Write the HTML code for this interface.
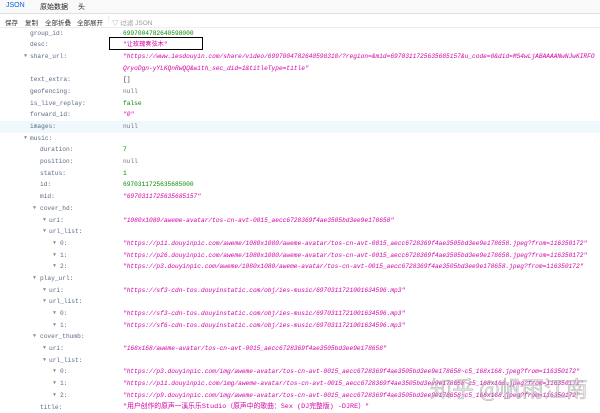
<!DOCTYPE html>
<html><head><meta charset="utf-8"><style>
*{margin:0;padding:0;box-sizing:border-box}
body{width:600px;height:413px;overflow:hidden;background:#fff;font-family:"Liberation Sans","Noto Sans CJK SC",sans-serif;position:relative}
.tabs{position:absolute;left:0;top:0;width:600px;height:14px;background:#f9f9fa;border-bottom:1px solid #e0e0e2;font-size:7px}
.tabs span{position:absolute;top:2px;color:#222}
.tb{position:absolute;left:0;top:14px;width:600px;height:14px;background:#fff;border-bottom:1px solid #eee;font-size:6.5px;color:#333}
.tb span{position:absolute;top:3px}
.rows{position:absolute;left:0;top:27.5px;width:600px;font-family:"Liberation Mono","Noto Sans CJK SC",monospace;font-size:6.2px}
.r{position:relative;height:11.7px;line-height:11.7px;white-space:nowrap}
.k{position:absolute;color:#5a6b85}
.v{position:absolute;left:123px}
.s{color:#d400a8;font-style:italic}
.n{color:#058b00}
.nl{color:#777}
.a{position:absolute;color:#888;font-size:5px}
.hl{background:#eef8fd}
</style></head><body>
<div class="tabs"><span style="left:6px;color:#0060df">JSON</span><span style="left:40px">原始数据</span><span style="left:78px">头</span></div>
<div class="tb"><span style="left:5px">保存</span><span style="left:25px">复制</span><span style="left:45px">全部折叠</span><span style="left:77px">全部展开</span><span style="left:108px;top:1px;color:#ddd">|</span><span style="left:112px;color:#999">▽ 过滤 JSON</span></div>
<div class="rows">
<div class="r"><span class="k" style="left:30px">group_id:</span><span class="v n">6997004782640598000</span></div>
<div class="r"><span class="k" style="left:30px">desc:</span><span class="v s" style="font-style:normal">"让玫瑰奏弦木"</span></div>
<div class="r"><span class="a" style="left:24px">▼</span><span class="k" style="left:30px">share_url:</span><span class="v s">"https://www.iesdouyin.com/share/video/6997004782640598310/?region=&amp;mid=6970311725635685157&amp;u_code=0&amp;did=MS4wLjABAAAANwNJwKIRFO</span></div>
<div class="r"><span class="v s">QryoDgn-yYLKQnRwQQ&amp;with_sec_did=1&amp;titleType=title"</span></div>
<div class="r"><span class="k" style="left:30px">text_extra:</span><span class="v" style="color:#333">[]</span></div>
<div class="r"><span class="k" style="left:30px">geofencing:</span><span class="v nl">null</span></div>
<div class="r"><span class="k" style="left:30px">is_live_replay:</span><span class="v n">false</span></div>
<div class="r"><span class="k" style="left:30px">forward_id:</span><span class="v s">"0"</span></div>
<div class="r hl"><span class="k" style="left:30px">images:</span><span class="v nl">null</span></div>
<div class="r"><span class="a" style="left:24px">▼</span><span class="k" style="left:30px">music:</span></div>
<div class="r"><span class="k" style="left:40px">duration:</span><span class="v n">7</span></div>
<div class="r"><span class="k" style="left:40px">position:</span><span class="v nl">null</span></div>
<div class="r"><span class="k" style="left:40px">status:</span><span class="v n">1</span></div>
<div class="r"><span class="k" style="left:40px">id:</span><span class="v n">6970311725635685000</span></div>
<div class="r"><span class="k" style="left:40px">mid:</span><span class="v s">"6970311725635685157"</span></div>
<div class="r"><span class="a" style="left:33px">▼</span><span class="k" style="left:40px">cover_hd:</span></div>
<div class="r"><span class="a" style="left:43px">▼</span><span class="k" style="left:49px">uri:</span><span class="v s">"1080x1080/aweme-avatar/tos-cn-avt-0015_aecc6728369f4ae3505bd3ee9e178658"</span></div>
<div class="r"><span class="a" style="left:43px">▼</span><span class="k" style="left:49px">url_list:</span></div>
<div class="r"><span class="a" style="left:53px">▼</span><span class="k" style="left:60px">0:</span><span class="v s">"https://p11.douyinpic.com/aweme/1080x1080/aweme-avatar/tos-cn-avt-0015_aecc6728369f4ae3505bd3ee9e178658.jpeg?from=116350172"</span></div>
<div class="r"><span class="a" style="left:53px">▼</span><span class="k" style="left:60px">1:</span><span class="v s">"https://p26.douyinpic.com/aweme/1080x1080/aweme-avatar/tos-cn-avt-0015_aecc6728369f4ae3505bd3ee9e178658.jpeg?from=116350172"</span></div>
<div class="r"><span class="a" style="left:53px">▼</span><span class="k" style="left:60px">2:</span><span class="v s">"https://p3.douyinpic.com/aweme/1080x1080/aweme-avatar/tos-cn-avt-0015_aecc6728369f4ae3505bd3ee9e178658.jpeg?from=116350172"</span></div>
<div class="r"><span class="a" style="left:33px">▼</span><span class="k" style="left:40px">play_url:</span></div>
<div class="r"><span class="a" style="left:43px">▼</span><span class="k" style="left:49px">uri:</span><span class="v s">"https://sf3-cdn-tos.douyinstatic.com/obj/ies-music/6970311721001634596.mp3"</span></div>
<div class="r"><span class="a" style="left:43px">▼</span><span class="k" style="left:49px">url_list:</span></div>
<div class="r"><span class="a" style="left:53px">▼</span><span class="k" style="left:60px">0:</span><span class="v s">"https://sf3-cdn-tos.douyinstatic.com/obj/ies-music/6970311721001634596.mp3"</span></div>
<div class="r"><span class="a" style="left:53px">▼</span><span class="k" style="left:60px">1:</span><span class="v s">"https://sf6-cdn-tos.douyinstatic.com/obj/ies-music/6970311721001634596.mp3"</span></div>
<div class="r"><span class="a" style="left:33px">▼</span><span class="k" style="left:40px">cover_thumb:</span></div>
<div class="r"><span class="a" style="left:43px">▼</span><span class="k" style="left:49px">uri:</span><span class="v s">"168x168/aweme-avatar/tos-cn-avt-0015_aecc6728369f4ae3505bd3ee9e178658"</span></div>
<div class="r"><span class="a" style="left:43px">▼</span><span class="k" style="left:49px">url_list:</span></div>
<div class="r"><span class="a" style="left:53px">▼</span><span class="k" style="left:60px">0:</span><span class="v s">"https://p3.douyinpic.com/img/aweme-avatar/tos-cn-avt-0015_aecc6728369f4ae3505bd3ee9e178658~c5_168x168.jpeg?from=116350172"</span></div>
<div class="r"><span class="a" style="left:53px">▼</span><span class="k" style="left:60px">1:</span><span class="v s">"https://p11.douyinpic.com/img/aweme-avatar/tos-cn-avt-0015_aecc6728369f4ae3505bd3ee9e178658~c5_168x168.jpeg?from=116350172"</span></div>
<div class="r"><span class="a" style="left:53px">▼</span><span class="k" style="left:60px">2:</span><span class="v s">"https://p9.douyinpic.com/img/aweme-avatar/tos-cn-avt-0015_aecc6728369f4ae3505bd3ee9e178658~c5_168x168.jpeg?from=116350172"</span></div>
<div class="r"><span class="k" style="left:40px">title:</span><span class="v s" style="font-style:normal;font-size:6.8px">"用户创作的原声一溪乐乐Studio（原声中的歌曲：Sex (DJ完整版) -DJRE）"</span></div>
</div>
<div style="position:absolute;left:109px;top:37px;width:94px;height:13px;border:1.5px solid #000"></div>
<div style="position:absolute;left:430px;top:372px;font-size:22px;color:rgba(210,210,210,0.5);-webkit-text-stroke:0.6px rgba(120,120,120,0.45);font-family:'Noto Sans CJK SC',sans-serif">知乎 @帆雨江南</div>
</body></html>
